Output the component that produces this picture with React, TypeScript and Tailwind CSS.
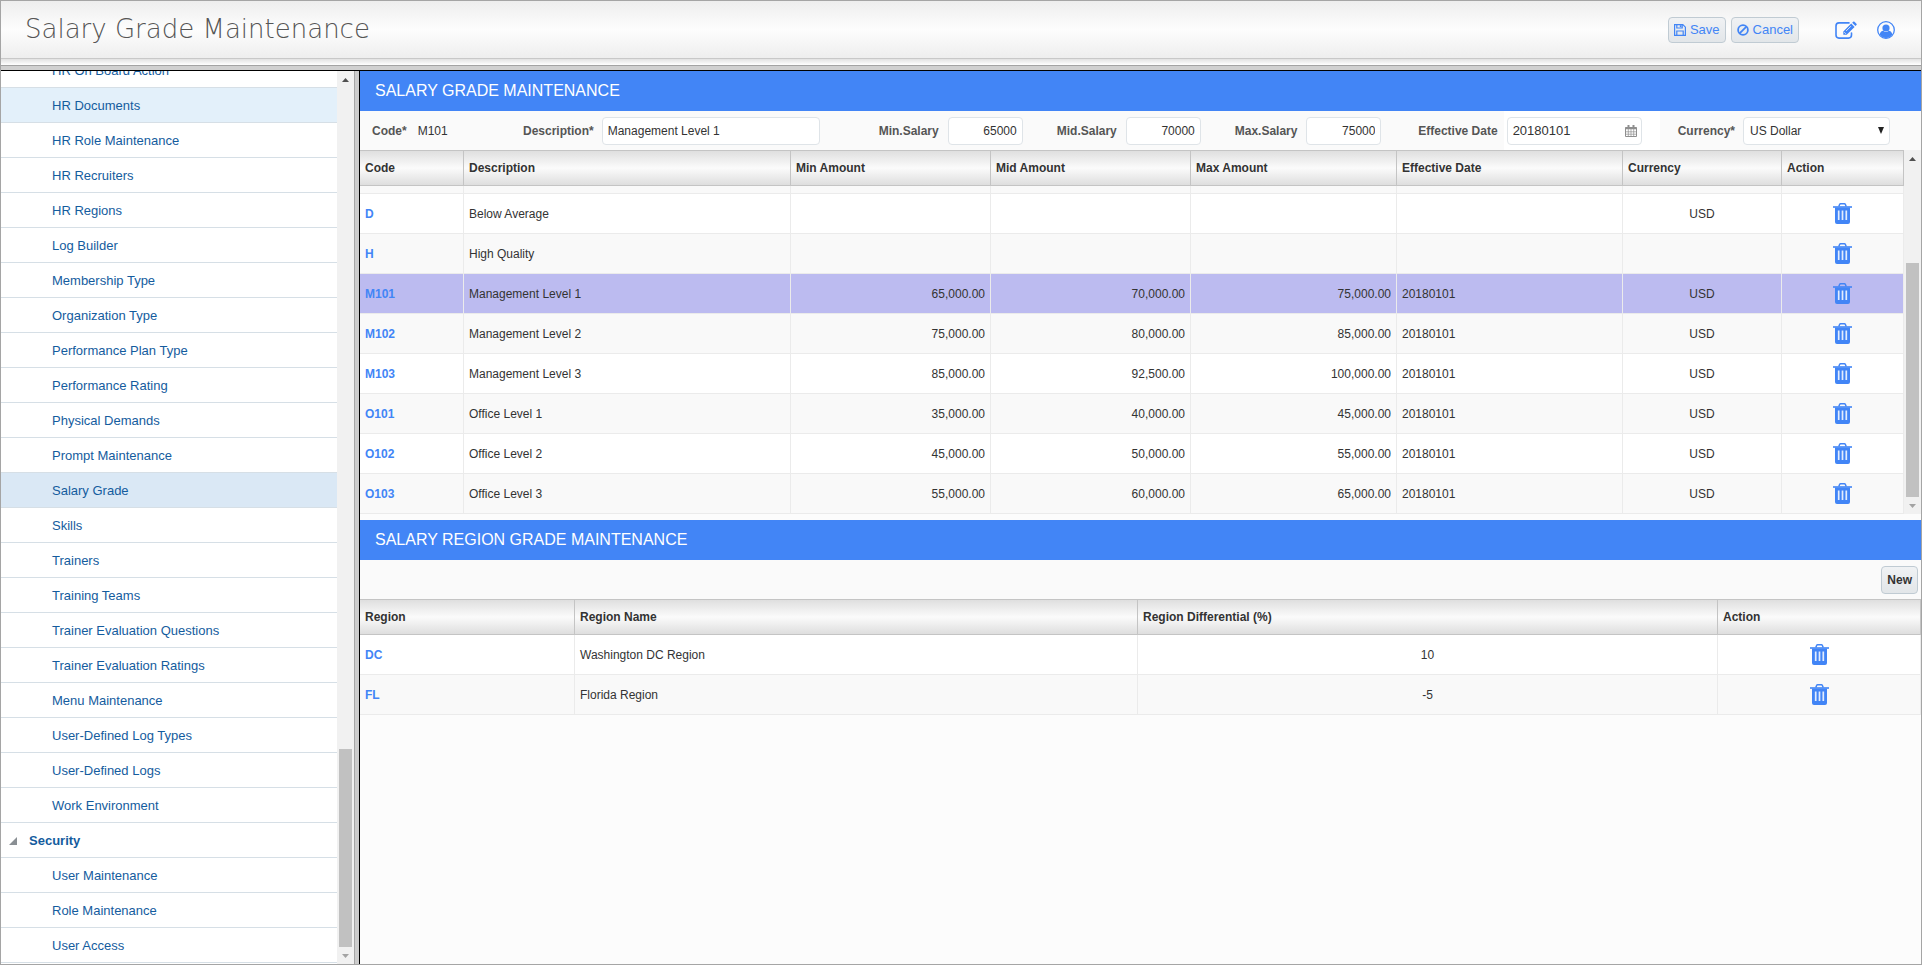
interface GradeRow {
  code: string;
  description: string;
  min: string;
  mid: string;
  max: string;
  date: string;
  currency: string;
}

interface RegionRow {
  region: string;
  name: string;
  differential: string;
}

const hrMenu = [
  "HR On Board Action",
  "HR Documents",
  "HR Role Maintenance",
  "HR Recruiters",
  "HR Regions",
  "Log Builder",
  "Membership Type",
  "Organization Type",
  "Performance Plan Type",
  "Performance Rating",
  "Physical Demands",
  "Prompt Maintenance",
  "Salary Grade",
  "Skills",
  "Trainers",
  "Training Teams",
  "Trainer Evaluation Questions",
  "Trainer Evaluation Ratings",
  "Menu Maintenance",
  "User-Defined Log Types",
  "User-Defined Logs",
  "Work Environment",
];

const securityMenu = ["User Maintenance", "Role Maintenance", "User Access"];

const grades: GradeRow[] = [
  { code: "D", description: "Below Average", min: "", mid: "", max: "", date: "", currency: "USD" },
  { code: "H", description: "High Quality", min: "", mid: "", max: "", date: "", currency: "" },
  { code: "M101", description: "Management Level 1", min: "65,000.00", mid: "70,000.00", max: "75,000.00", date: "20180101", currency: "USD" },
  { code: "M102", description: "Management Level 2", min: "75,000.00", mid: "80,000.00", max: "85,000.00", date: "20180101", currency: "USD" },
  { code: "M103", description: "Management Level 3", min: "85,000.00", mid: "92,500.00", max: "100,000.00", date: "20180101", currency: "USD" },
  { code: "O101", description: "Office Level 1", min: "35,000.00", mid: "40,000.00", max: "45,000.00", date: "20180101", currency: "USD" },
  { code: "O102", description: "Office Level 2", min: "45,000.00", mid: "50,000.00", max: "55,000.00", date: "20180101", currency: "USD" },
  { code: "O103", description: "Office Level 3", min: "55,000.00", mid: "60,000.00", max: "65,000.00", date: "20180101", currency: "USD" },
];

const regions: RegionRow[] = [
  { region: "DC", name: "Washington DC Region", differential: "10" },
  { region: "FL", name: "Florida Region", differential: "-5" },
];

const SELECTED_CODE = "M101";

function SaveIcon() {
  return (
    <svg viewBox="0 0 12 12" className="size-3" fill="none" stroke="currentColor" strokeWidth="1.2" aria-hidden="true">
      <path d="M.6.6h8.200l2.600 2.600v8.200H.6z" />
      <path d="M2.800.6v3.400h5.400V.6M2.800 11.400V7h6.400v4.400" />
      <path d="M5.800 1.200h1.600v1.900H5.800z" fill="currentColor" stroke="none" />
    </svg>
  );
}

function BanIcon() {
  return (
    <svg viewBox="0 0 12 12" className="size-3" fill="none" stroke="currentColor" strokeWidth="1.8" aria-hidden="true">
      <circle cx="6" cy="6" r="4.9" />
      <path d="M9.400 2.600 2.600 9.400" />
    </svg>
  );
}

function EditIcon() {
  return (
    <svg viewBox="0 0 22 18" className="h-[18px] w-[22px]" aria-hidden="true">
      <path
        d="M14 1.900H4a3 3 0 0 0-3 3v9.200a3 3 0 0 0 3 3h9.500a3 3 0 0 0 3-3V12"
        fill="none"
        stroke="currentColor"
        strokeWidth="1.6"
        strokeLinecap="round"
      />
      <path
        d="m16.200 2.600 3.400 3.300-7.900 7.800H8.300v-3.300zM17.200 1.700l.9-.9a1 1 0 0 1 1.400 0l1.900 1.900a1 1 0 0 1 0 1.400l-.9.900z"
        fill="currentColor"
      />
      <path d="m9.300 11.200 1.600 1.600M11.200 9.900l4.700-4.700" stroke="#f3f3f3" strokeWidth=".9" />
    </svg>
  );
}

function UserIcon() {
  return (
    <svg viewBox="0 0 18 18" className="size-[18px]" aria-hidden="true">
      <circle cx="9" cy="9" r="8.3" fill="none" stroke="currentColor" strokeWidth="1.3" />
      <circle cx="9" cy="7" r="3.6" fill="currentColor" />
      <path d="M2.700 13.600c.4-2.300 1.500-3.700 3.500-3.900a4.300 4.300 0 0 0 5.600 0c2 .2 3.100 1.600 3.500 3.900A8 8 0 0 1 9 17a8 8 0 0 1-6.300-3.400z" fill="currentColor" />
    </svg>
  );
}

function CalendarIcon() {
  return (
    <svg viewBox="0 0 12 12" className="size-3 shrink-0 text-[#8f8f8f]" fill="none" stroke="currentColor" aria-hidden="true">
      <path d="M.5 2.500h11v9H.5z" />
      <path d="M.5 3.200h11M3.500 0v3M8.500 0v3" strokeWidth="2" />
      <path d="M3.300 4v7.500M6 4v7.500M8.700 4v7.500M.5 6.800h11M.5 9.200h11" strokeWidth=".7" />
    </svg>
  );
}

function TrashIcon() {
  return (
    <svg viewBox="0 0 19 21" className="h-[21px] w-[19px]" aria-hidden="true">
      <path d="M5.800 3.500 6.600 1.500Q6.900.8 7.600.8h3.800q.7 0 1 .7l.8 2" fill="none" stroke="currentColor" strokeWidth="1.5" />
      <path d="M0 3.200h19v1.600H0z" fill="currentColor" />
      <path d="M2 4.500h15V19a2 2 0 0 1-2 2H4a2 2 0 0 1-2-2z" fill="currentColor" />
      <path d="M5.700 7.500V17M9.500 7.500V17M13.300 7.500V17" stroke="#fff" strokeOpacity=".85" strokeWidth="1.7" />
    </svg>
  );
}

function Scrollbar({ thumb }: { thumb: string }) {
  return (
    <div className="flex w-[17px] shrink-0 flex-col items-center bg-[#f1f1f1]" aria-hidden="true">
      <svg viewBox="0 0 17 17" className="size-[17px]">
        <path d="M5 11h7L8.500 7z" fill="#505050" />
      </svg>
      <div className="flex min-h-0 w-full grow flex-col items-center">
        <div className={thumb} />
      </div>
      <svg viewBox="0 0 17 17" className="size-[17px]">
        <path d="M5 7h7l-3.500 4z" fill="#a3a3a3" />
      </svg>
    </div>
  );
}

function MenuLink({ label }: { label: string }) {
  const state =
    label === "Salary Grade" ? "bg-[#dae8f5]" : label === "HR Documents" ? "bg-[#e3f0fa]" : "bg-white";

  return (
    <li className="shrink-0">
      <a href="#" className={`flex h-[35px] items-center border-b border-[#d6dfe6] pt-0.5 pl-[51px] text-[#145c9e] ${state}`}>
        {label}
      </a>
    </li>
  );
}

function SectionTitle({ children }: { children: string }) {
  return <h2 className="flex h-10 items-center bg-[#4285f6] px-[15px] text-base text-white">{children}</h2>;
}

function HeadCell({ children, width = "" }: { children: string; width?: string }) {
  return (
    <th
      className={`h-9 border-y border-r border-[#c4c4c4] bg-linear-to-b from-[#dfdfdf] via-[#fbfbfb] to-[#dedede] px-[5px] text-left font-bold ${width}`}
    >
      {children}
    </th>
  );
}

const cell = "border-r border-b border-[#ebebeb] px-[5px]";
const label = "font-bold text-[#555]";
const field = "h-7 rounded border border-[#dfe4e8] bg-white text-[#333]";
const salaryGroup = "flex items-center gap-[9px]";
const button =
  "flex items-center rounded border border-[#c0cbd3] bg-linear-to-b from-[#f0f2f4] to-[#e2e6e9]";

export default function App() {
  return (
    <div className="flex h-screen flex-col overflow-hidden border border-[#a5a5a5] bg-[#fcfcfc] font-['Liberation_Sans',Arial,sans-serif] text-xs text-[#333]">
      {/* Top bar */}
      <header className="flex h-[58px] shrink-0 items-center justify-between border-b border-[#c8c8c8] bg-linear-to-b from-[#eeeeee] via-[#fdfdfd] to-[#eeeeee] pr-[26px] pl-6">
        <h1 className="font-['DejaVu_Sans_Light','DejaVu_Sans',sans-serif] text-[26px] font-extralight text-[#555]">
          Salary Grade Maintenance
        </h1>
        <div className="flex items-center text-[13px] text-[#4285f6]">
          <button type="button" className={`${button} h-[26px] gap-1 px-[5px]`}>
            <SaveIcon />
            Save
          </button>
          <button type="button" className={`${button} ml-[5px] h-[26px] gap-1 px-[5px]`}>
            <BanIcon />
            Cancel
          </button>
          <button type="button" aria-label="Edit" className="ml-9">
            <EditIcon />
          </button>
          <button type="button" aria-label="Account" className="ml-5">
            <UserIcon />
          </button>
        </div>
      </header>
      <div className="h-[7px] shrink-0 border-b border-[#a3a3a3] bg-linear-to-b from-[#e2e2e2] to-white" />
      <div className="h-[5px] shrink-0 border-b border-black bg-[#d0d0d0]" />

      <div className="flex min-h-0 grow">
        {/* Navigation */}
        <nav className="flex w-[353px] shrink-0 text-[13px]">
          <ul className="flex min-w-0 grow flex-col justify-end overflow-hidden bg-white pb-px">
            {hrMenu.map((item) => (
              <MenuLink key={item} label={item} />
            ))}
            <li className="flex h-[35px] shrink-0 items-center border-b border-[#d6dfe6] pt-0.5 font-bold text-[#145c9e]">
              <svg viewBox="0 0 8 8" className="mr-3 ml-2 size-2" aria-hidden="true">
                <path d="M8 0v8H0z" fill="#8a8f94" />
              </svg>
              Security
            </li>
            {securityMenu.map((item) => (
              <MenuLink key={item} label={item} />
            ))}
          </ul>
          <Scrollbar thumb="mt-auto h-[23%] w-[13px] bg-[#c1c1c1]" />
        </nav>
        <div className="w-1.5 shrink-0 border-r border-l border-r-black border-l-[#a5a5a5] bg-[#ccc]" />

        <main className="min-w-0 grow">
          <SectionTitle>SALARY GRADE MAINTENANCE</SectionTitle>
          <form className="flex h-[39px] items-center bg-[#fafafa] pr-[31px] pl-3">
            <div className="flex w-[151px] items-center gap-[11px]">
              <span className={label}>Code*</span>
              <span>M101</span>
            </div>
            <div className="mr-[59px] flex items-center gap-2">
              <label htmlFor="description" className={label}>Description*</label>
              <input id="description" defaultValue="Management Level 1" className={`${field} w-[218px] px-[5px]`} />
            </div>
            <div className={`${salaryGroup} mr-[34px]`}>
              <label htmlFor="min" className={label}>Min.Salary</label>
              <input id="min" defaultValue="65000" className={`${field} w-[75px] px-[5px] text-right`} />
            </div>
            <div className={`${salaryGroup} mr-[34px]`}>
              <label htmlFor="mid" className={label}>Mid.Salary</label>
              <input id="mid" defaultValue="70000" className={`${field} w-[75px] px-[5px] text-right`} />
            </div>
            <div className={salaryGroup}>
              <label htmlFor="max" className={label}>Max.Salary</label>
              <input id="max" defaultValue="75000" className={`${field} w-[75px] px-[5px] text-right`} />
            </div>
            <div className="ml-auto flex items-center gap-1.5">
              <label htmlFor="date" className={label}>Effective Date</label>
              <div className="flex h-[39px] w-[156px] items-center bg-white pl-[3px]">
                <div className={`${field} flex w-[135px] items-center pr-1 pl-[5px]`}>
                  <input id="date" defaultValue="20180101" className="min-w-0 grow text-[13px]" />
                  <CalendarIcon />
                </div>
              </div>
            </div>
            <div className="ml-[18px] flex items-center gap-2">
              <label htmlFor="currency" className={label}>Currency*</label>
              <div className="relative">
                <select id="currency" className={`${field} w-[147px] appearance-none px-1.5`}>
                  <option>US Dollar</option>
                </select>
                <svg viewBox="0 0 6 7" className="pointer-events-none absolute top-2.5 right-1.5 h-[7px] w-1.5" aria-hidden="true">
                  <path d="M0 0h6L3 7z" fill="#222" />
                </svg>
              </div>
            </div>
          </form>

          <div className="mb-1.5 flex bg-white">
            <table className="min-w-0 grow table-fixed border-separate border-spacing-0">
              <thead>
                <tr>
                  <HeadCell width="w-[104px]">Code</HeadCell>
                  <HeadCell>Description</HeadCell>
                  <HeadCell width="w-[200px]">Min Amount</HeadCell>
                  <HeadCell width="w-[200px]">Mid Amount</HeadCell>
                  <HeadCell width="w-[206px]">Max Amount</HeadCell>
                  <HeadCell width="w-[226px]">Effective Date</HeadCell>
                  <HeadCell width="w-[159px]">Currency</HeadCell>
                  <HeadCell width="w-[122px]">Action</HeadCell>
                </tr>
              </thead>
              <tbody>
                {/* Tail of the row scrolled under the header */}
                <tr className="h-2 bg-[#f9f9f9]">
                  {[0, 1, 2, 3, 4, 5, 6, 7].map((i) => (
                    <td key={i} className={cell} />
                  ))}
                </tr>
                {grades.map((row) => (
                  <tr
                    key={row.code}
                    className={`h-10 ${row.code === SELECTED_CODE ? "bg-[#bcbbf0]" : "odd:bg-[#f9f9f9] even:bg-white"}`}
                  >
                    <td className={cell}>
                      <a href="#" className="font-bold text-[#4285f6]">{row.code}</a>
                    </td>
                    <td className={cell}>{row.description}</td>
                    <td className={`${cell} text-right`}>{row.min}</td>
                    <td className={`${cell} text-right`}>{row.mid}</td>
                    <td className={`${cell} text-right`}>{row.max}</td>
                    <td className={cell}>{row.date}</td>
                    <td className={`${cell} text-center`}>{row.currency}</td>
                    <td className={cell}>
                      <button type="button" aria-label={`Delete ${row.code}`} className="mx-auto block text-[#4285f6]">
                        <TrashIcon />
                      </button>
                    </td>
                  </tr>
                ))}
              </tbody>
            </table>
            <Scrollbar thumb="mt-auto h-[71%] w-[13px] bg-[#c1c1c1]" />
          </div>

          <SectionTitle>SALARY REGION GRADE MAINTENANCE</SectionTitle>
          <div className="flex h-[39px] items-center justify-end bg-[#fafafa] pr-[3px]">
            <button type="button" className={`${button} h-7 px-[5px] font-bold`}>
              New
            </button>
          </div>
          <table className="w-full table-fixed border-separate border-spacing-0">
            <thead>
              <tr>
                <HeadCell width="w-[215px]">Region</HeadCell>
                <HeadCell>Region Name</HeadCell>
                <HeadCell width="w-[580px]">Region Differential (%)</HeadCell>
                <HeadCell width="w-[203px]">Action</HeadCell>
              </tr>
            </thead>
            <tbody>
              {regions.map((row) => (
                <tr key={row.region} className="h-10 odd:bg-white even:bg-[#f9f9f9]">
                  <td className={cell}>
                    <a href="#" className="font-bold text-[#4285f6]">{row.region}</a>
                  </td>
                  <td className={cell}>{row.name}</td>
                  <td className={`${cell} text-center`}>{row.differential}</td>
                  <td className={cell}>
                    <button type="button" aria-label={`Delete ${row.region}`} className="mx-auto block text-[#4285f6]">
                      <TrashIcon />
                    </button>
                  </td>
                </tr>
              ))}
            </tbody>
          </table>
        </main>
      </div>
    </div>
  );
}
